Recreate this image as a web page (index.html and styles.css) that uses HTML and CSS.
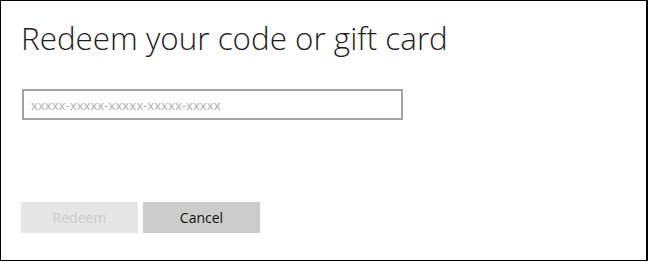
FILE: index.html
```html
<!DOCTYPE html>
<html lang="en">
<head>
  <meta charset="UTF-8">
  <title>Redeem your code or gift card</title>
  <link rel="stylesheet" href="styles.css">
</head>
<body>
  <div class="dialog">
    <h1 class="dialog-title">Redeem your code or gift card</h1>

    <input class="code-input" type="text" placeholder="xxxxx-xxxxx-xxxxx-xxxxx-xxxxx">

    <div class="dialog-buttons">
      <button class="dialog-button redeem-button" disabled>Redeem</button>
      <button class="dialog-button cancel-button">Cancel</button>
    </div>
  </div>
</body>
</html>
```

FILE: styles.css
```css
body {
  font-family: "Open Sans", "Noto Sans", sans-serif;
  background-color: white;
  margin: 0;
  padding: 0;
}

.dialog {
  box-sizing: border-box;
  width: 648px;
  height: 261px;
  border: 1px solid #000;
  border-right-width: 2px;
  padding: 17px 20px 0;
  display: flex;
  flex-direction: column;
  align-items: flex-start;
}

.dialog-title {
  margin: 0;
  font-size: 31.4px;
  font-weight: 300;
  line-height: 40px;
  color: #1e1e1e;
}

.code-input {
  box-sizing: border-box;
  width: 381px;
  height: 31px;
  margin: 31px 0 0 1px;
  padding: 0 7px;
  border: 2px solid #a3a3a3;
  font-family: inherit;
  font-size: 13.2px;
  outline: none;
}

.code-input::placeholder {
  color: #b0b0b0;
}

.dialog-buttons {
  display: flex;
  gap: 5px;
  margin-top: 82px;
}

.dialog-button {
  width: 117px;
  height: 31px;
  border: none;
  font-family: inherit;
  font-size: 14px;
  padding: 0;
}

.redeem-button {
  background-color: #e6e6e6;
  color: #cccccc;
}

.cancel-button {
  background-color: #cccccc;
  color: #111;
}
```
